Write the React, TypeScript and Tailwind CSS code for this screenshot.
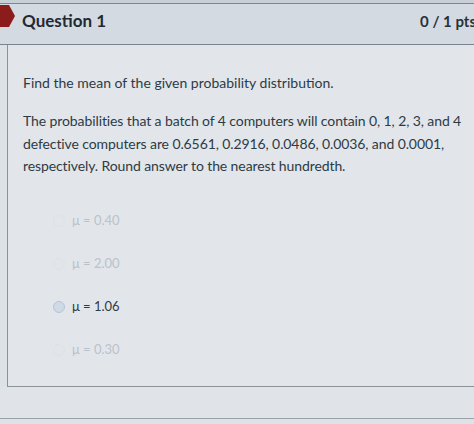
import React from 'react'

const options = [
  { label: 'μ = 0.40', selected: false },
  { label: 'μ = 2.00', selected: false },
  { label: 'μ = 1.06', selected: true },
  { label: 'μ = 0.30', selected: false },
]

export default function App() {
  return (
    <div
      className="w-[474px] h-[424px] overflow-hidden bg-[#dde2e6] text-[#2d3b45]"
      style={{ fontFamily: 'Lato, "Noto Sans", sans-serif' }}
    >
      {/* top strip */}
      <div className="h-[4px] bg-[#c9cfd6] border-b border-[#7e868f]" />

      {/* Header */}
      <div className="relative h-[41px] flex items-center justify-between bg-[#d4dae1] border-b border-[#7b838c] pl-[22px] pr-0">
        <div className="absolute left-0 top-[1px] w-[15px] h-[22px] bg-[#8c1c1c] [clip-path:polygon(0_0,60%_0,100%_50%,60%_100%,0_100%)]" />
        <h2 className="text-[17px] font-bold leading-none text-[#1f2a33] -mt-[7px]">Question 1</h2>
        <span className="text-[15px] font-bold leading-none text-[#26323b] -mr-[2px] -mt-[6px]">0 / 1 pts</span>
      </div>

      {/* Body */}
      <div className="ml-[7px] h-[342px] bg-[#e2e6ea] border-l border-b border-[#8a9199] pl-[15px] pt-[27px]">
        <p className="text-[14px] leading-[22px]">Find the mean of the given probability distribution.</p>
        <p className="mt-[16px] text-[14px] leading-[22.5px] tracking-[-0.1px]">
          The probabilities that a batch of 4 computers will contain 0, 1, 2, 3, and 4 defective computers
          are 0.6561, 0.2916, 0.0486, 0.0036, and 0.0001, respectively. Round answer to the nearest
          hundredth.
        </p>
        <div className="mt-[22px] flex flex-col">
          {options.map((o) => (
            <div key={o.label} className="h-[43px] flex items-center">
              <span
                className={
                  o.selected
                    ? 'ml-[30px] w-[12px] h-[12px] rounded-full border border-[#b7c4d4] bg-[#d0dae6]'
                    : 'ml-[30px] w-[12px] h-[12px] rounded-full border border-[#dde2e7]'
                }
              />
              <span
                className={
                  o.selected
                    ? 'ml-[7px] text-[13px] text-[#2d3b45]'
                    : 'ml-[7px] text-[13px] text-[#b9c2ca]'
                }
              >
                {o.label}
              </span>
            </div>
          ))}
        </div>
      </div>

      {/* below */}
      <div className="h-[32px] bg-[#e0e4e8] border-b border-[#9aa1a8]" />
    </div>
  )
}
